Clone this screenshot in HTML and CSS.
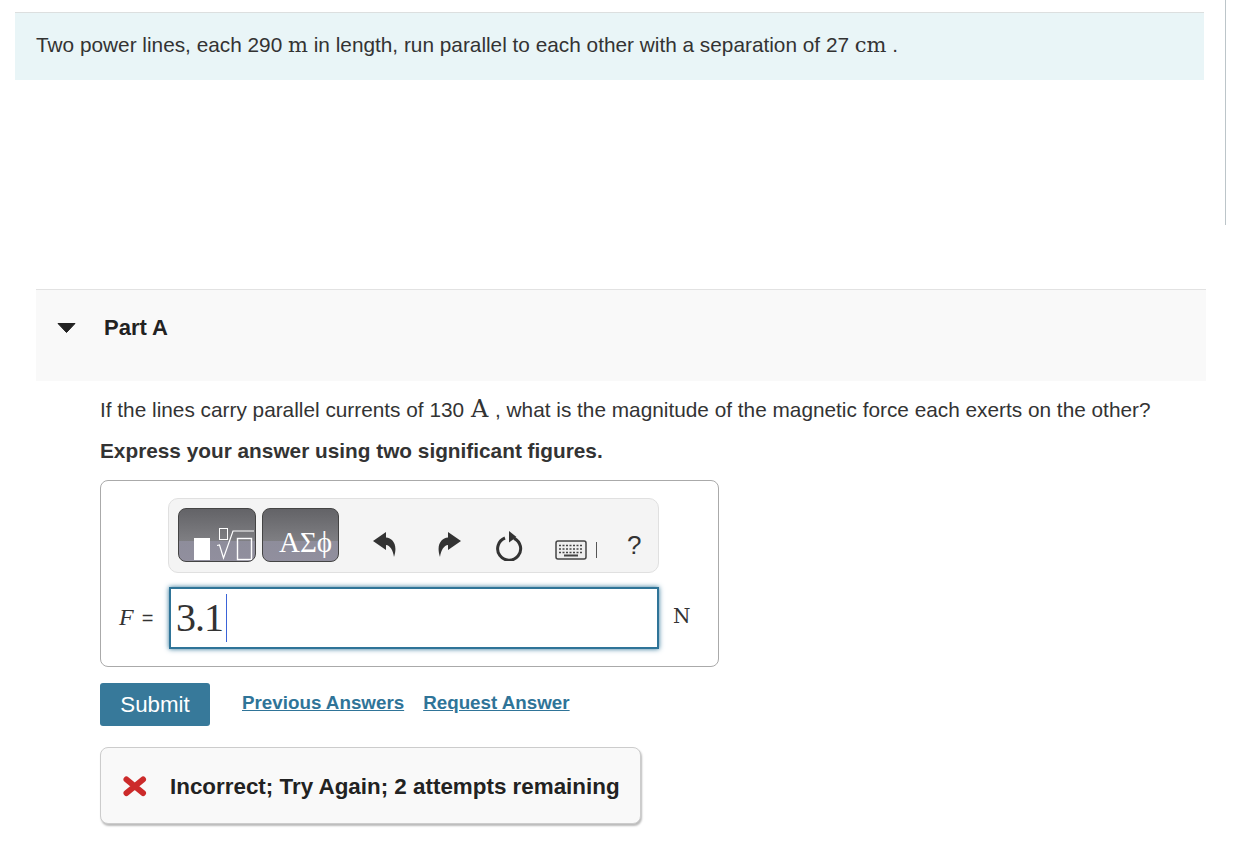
FILE: index.html
```html
<!DOCTYPE html>
<html lang="en">
<head>
<meta charset="utf-8">
<title>Part A</title>
<link rel="stylesheet" href="styles.css">
</head>
<body>
<div class="edge-line"></div>
<section class="intro">
  <p>Two power lines, each 290 <span class="unit">m</span> in length, run parallel to each other with a separation of 27 <span class="unit">cm</span> .</p>
</section>
<section class="part">
  <header class="part-head">
    <svg class="caret" width="19" height="11" viewBox="0 0 19 11"><path d="M1 1.500h17L9.500 10.500z" fill="#222" stroke="#222" stroke-linejoin="round"/></svg>
    <h2>Part A</h2>
  </header>
  <div class="part-body">
    <p class="question">If the lines carry parallel currents of 130 <span class="unit unit-a">A</span> , what is the magnitude of the magnetic force each exerts on the other?</p>
    <p class="instruction">Express your answer using two significant figures.</p>
    <div class="answer-box">
      <div class="toolbar">
        <div class="tool-btn">
          <svg class="templ" width="78" height="54" viewBox="0 0 78 54">
            <rect x="16" y="30" width="16" height="22" fill="#fff"/>
            <g fill="none" stroke="#fff">
              <rect x="41.500" y="20.500" width="8" height="11" stroke-width="1"/>
              <path d="M39 37.500l2.500-.5 4 13 9.500-27h21" stroke-width="1.200"/>
              <rect x="59.500" y="30.500" width="14" height="21" stroke-width="1.400"/>
            </g>
          </svg>
        </div>
        <div class="tool-btn greek">ΑΣϕ</div>
        <div class="tools">
          <svg class="t-undo" width="24" height="26" viewBox="0 0 24 26"><path d="M0 9L13 0v5.500C20 6 25 13 21 25 20 18 17 13.500 13 13v5z" fill="#333"/></svg>
          <svg class="t-redo" width="24" height="26" viewBox="0 0 24 26"><path d="M24 9L11 0v5.500C4 6-1 13 3 25 4 18 7 13.500 11 13v5z" fill="#333"/></svg>
          <svg class="t-reset" width="30" height="32" viewBox="0 0 30 32"><path d="M10 9a11.500 11.500 0 1 0 9 .3" fill="none" stroke="#333" stroke-width="3"/><path d="M14 2l7.500 6-7.500 5.500z" fill="#333"/></svg>
          <svg class="t-keys" width="32" height="20" viewBox="0 0 32 20">
            <rect x="1" y="1" width="30" height="18" rx="2" fill="#eee" stroke="#444" stroke-width="1.500"/>
            <path d="M4 5.500h24M4 9h24M4 12.500h24" stroke="#444" stroke-width="1.500" stroke-dasharray="2 1.500"/>
            <path d="M9 15.500h14" stroke="#444" stroke-width="2"/>
          </svg>
          <span class="t-bar"></span>
          <span class="t-help">?</span>
        </div>
      </div>
      <div class="eq-row">
        <span class="lhs"><i>F</i> <span class="eq">=</span></span>
        <div class="input"><span class="val">3.1</span><span class="cursor"></span></div>
        <span class="rhs">N</span>
      </div>
    </div>
    <div class="actions">
      <button class="submit" type="button">Submit</button>
      <a class="link first" href="#">Previous Answers</a>
      <a class="link" href="#">Request Answer</a>
    </div>
    <div class="feedback">
      <svg width="24" height="22" viewBox="0 0 24 22"><path d="M3.500 4.500L20 18M20 4.500L3.500 18" stroke="#cc2b2b" stroke-width="6" stroke-linecap="round"/></svg>
      <strong>Incorrect; Try Again; 2 attempts remaining</strong>
    </div>
  </div>
</section>
</body>
</html>
```

FILE: styles.css
```css
* { box-sizing: border-box; }
html, body { margin: 0; padding: 0; }
body {
  width: 1234px;
  height: 858px;
  overflow: hidden;
  background: #fff;
  color: #333;
  font-family: "Liberation Sans", Arial, sans-serif;
  font-size: 20.800px;
  padding-top: 12px;
  position: relative;
}
p { margin: 0; }
.edge-line {
  position: absolute;
  left: 1225px;
  top: 0;
  width: 1px;
  height: 225px;
  background: #bcc5c9;
}
.intro {
  margin-left: 15px;
  width: 1189px;
  height: 68px;
  background: #e9f5f7;
  border-top: 1px solid #dcdfdf;
  padding: 20px 0 0 21px;
  line-height: 24px;
}
.unit { font-family: "DejaVu Serif", "Liberation Serif", serif; font-size: 21px; line-height: 1; }
.unit-a { font-size: 24px; margin: 0 1px; }
.part { margin: 209px 0 0 36px; width: 1170px; }
.part-head {
  height: 92px;
  background: #f9f9f9;
  border-top: 1px solid #e2e2e2;
  display: flex;
  align-items: flex-start;
  padding: 26px 0 0 21px;
}
.caret { margin-top: 6px; }
.part-head h2 {
  margin: 0 0 0 28px;
  font-size: 22px;
  line-height: 24px;
  font-weight: bold;
  color: #222;
}
.part-body { padding: 16px 0 0 64px; }
.question { line-height: 24px; }
.instruction { margin-top: 17px; font-weight: bold; line-height: 24px; }
.answer-box {
  margin-top: 17px;
  width: 619px;
  height: 187px;
  border: 1px solid #aaa;
  border-radius: 8px;
  padding-top: 17px;
}
.toolbar {
  margin-left: 67px;
  width: 491px;
  height: 75px;
  background: #f4f4f4;
  border: 1px solid #e0e0e0;
  border-radius: 10px;
  padding: 9px 0 0 9px;
  display: flex;
  align-items: flex-start;
  gap: 6px;
}
.tool-btn {
  width: 78px;
  height: 54px;
  border: 1px solid #444;
  border-radius: 8px;
  background: linear-gradient(#636367 0%, #7f7f83 62%, #8e8d9b 62%, #918f9e 100%);
  overflow: hidden;
}
.templ { display: block; margin: -1px; }
.greek {
  width: 77px;
  color: #fff;
  font-family: "Liberation Serif", serif;
  font-size: 29px;
  line-height: 66px;
  text-align: center;
  padding-left: 10px;
  white-space: nowrap;
}
.tools { flex: 1; height: 54px; padding-top: 20px; display: flex; align-items: center; }
.t-undo { margin-left: 28px; }
.t-redo { margin-left: 40px; }
.t-reset { margin-left: 34px; }
.t-keys { margin: 10px 0 0 30px; }
.t-bar { width: 1px; height: 16px; background: #555; margin: 10px 0 0 9px; }
.t-help { margin-left: 30px; font-size: 26px; line-height: 30px; color: #333; }
.eq-row { display: flex; align-items: center; margin-top: 14px; }
.lhs {
  width: 68px;
  padding: 0 0 2px 18px;
  font-family: "Liberation Serif", serif;
  font-size: 24px;
  white-space: nowrap;
}
.lhs .eq { margin-left: 2px; font-family: "Liberation Sans", sans-serif; font-size: 20px; }
.input {
  width: 490px;
  height: 62px;
  border: 2px solid #2f7498;
  box-shadow: 0 0 5px #2f7498;
  background: #fff;
  display: flex;
  align-items: center;
  padding-left: 5px;
}
.val { font-family: "Liberation Serif", serif; font-size: 40px; line-height: 48px; color: #333; letter-spacing: -1px; }
.cursor { width: 1px; height: 48px; background: #3b64d8; margin-left: 3px; }
.rhs { margin: 0 0 4px 14px; font-family: "DejaVu Serif", serif; font-size: 20px; }
.actions { display: flex; align-items: center; margin-top: 16px; height: 43px; }
.submit {
  width: 110px;
  height: 43px;
  border: 0;
  border-radius: 3px;
  background: #37799a;
  color: #fff;
  font: 22.300px "Liberation Sans", sans-serif;
  padding: 0;
}
.link { margin-bottom: 4px; font-size: 18.800px; font-weight: bold; color: #2f7498; text-decoration: underline; }
.link.first { margin: 0 19px 4px 32px; }
.feedback {
  margin-top: 21px;
  width: 541px;
  height: 77px;
  background: #f9f9f9;
  border: 1px solid #ccc;
  border-radius: 8px;
  box-shadow: 1px 2px 2px #bbb;
  display: flex;
  align-items: center;
  padding-left: 22px;
  gap: 23px;
}
.feedback strong { margin-top: 2px; font-size: 22.400px; color: #222; }
```
